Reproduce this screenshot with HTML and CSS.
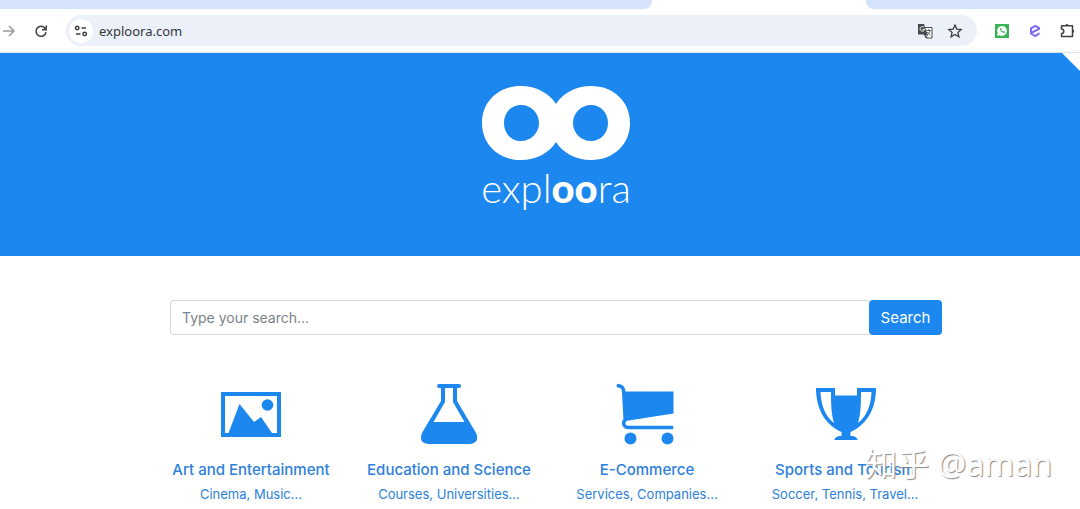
FILE: index.html
```html
<!DOCTYPE html>
<html lang="en">
<head>
    <meta charset="UTF-8">
    <meta name="viewport" content="width=device-width, initial-scale=1.0">
    <title>exploora</title>
    <link rel="stylesheet" href="styles.css">
</head>
<body>
    <!-- Browser bar -->
    <div class="tabs">
        <div class="tab-left"></div>
        <div class="tab-right"></div>
    </div>
    <div class="toolbar">
        <button class="tool" type="button" aria-label="Forward">
            <svg width="16" height="16" viewBox="0 0 16 16" fill="none" stroke="#9a9a9a" stroke-width="1.5"><path d="M3 8h11M9 3l5 5-5 5"/></svg>
        </button>
        <button class="tool" type="button" aria-label="Reload">
            <svg width="16" height="16" viewBox="0 0 16 16" fill="none" stroke="#3c4043" stroke-width="1.5"><path d="M13 9.200A5 5 0 1 1 12 5.200L13 6.400"/><path d="M13.200 2.600v4.200H9"/></svg>
        </button>
        <div class="address">
            <button class="site-info" type="button" aria-label="Site information">
                <svg width="14" height="14" viewBox="0 0 14 14" fill="none" stroke="#3c4043" stroke-width="1.5"><circle cx="3.2" cy="4" r="1.7"/><path d="M7.5 4H12M2 10h4.5"/><circle cx="10.7" cy="10" r="1.7"/></svg>
            </button>
            <input class="url" type="text" value="exploora.com" aria-label="Address">
            <button class="tool" type="button" aria-label="Translate">
                <svg width="16" height="16" viewBox="0 0 16 16"><path d="M6.5 4.500H15V15H9z" fill="#fff" stroke="#4a4d51"/><path d="M1 1h6l3.500 10.500H1z" fill="#45484c"/><path d="M7.300 4.600A2.300 2.300 0 1 0 7.600 6.500H5.600" fill="none" stroke="#fff"/><path d="M9.500 7.500h4.500M11.700 6.200v1.300M13 7.500c-.4 2-1.600 3.500-3 4.500M10.300 9c.8 1.500 2 2.500 3.200 3M7 11.500L9.500 15l.8-3.500z" fill="none" stroke="#4a4d51" stroke-width=".9"/></svg>
            </button>
            <button class="tool" type="button" aria-label="Bookmark">
                <svg width="16" height="16" viewBox="0 0 16 16" fill="none" stroke="#3c4043" stroke-width="1.3"><path d="M8 2l1.800 4.100 4.400.4-3.300 2.900 1 4.400L8 11.500l-3.900 2.300 1-4.400-3.300-2.900 4.400-.4z"/></svg>
            </button>
        </div>
        <button class="tool" type="button" aria-label="WhatsApp">
            <svg width="16" height="16" viewBox="0 0 16 16"><path d="M1 1h14v14H1z" fill="#38b454"/><path d="M3 12.800l.7-2.500a4.900 4.900 0 1 1 2 1.900z" fill="#fff"/><path d="M6 5.500c0 2.600 1.800 4.400 4.300 4.500l.6-1.300-1.500-.8-.6.600c-.8-.3-1.300-.9-1.600-1.600l.5-.6-.6-1.400z" fill="#38b454"/></svg>
        </button>
        <button class="tool" type="button" aria-label="Extension">
            <svg width="16" height="16" viewBox="0 0 16 16" fill="none" stroke="#7c6cf0" stroke-width="2"><path d="M5 9.500l7-3.500V4.800L8.300 2.800 4 5.300v5.200L8.300 13l4.200-2.800"/></svg>
        </button>
        <button class="tool" type="button" aria-label="Extensions menu">
            <svg width="16" height="16" viewBox="0 0 16 16" fill="none" stroke="#3c4043" stroke-width="1.5"><path d="M1.500 2.800H12.500V13.500H1.500V10.500a2.300 2.300 0 0 0 0-4.600z" stroke-linejoin="round"/><path d="M5.300 2.800a1.700 1.700 0 0 1 3.400 0zM12.500 6.500a1.700 1.700 0 0 1 0 3.400z" fill="#3c4043" stroke="none"/></svg>
        </button>
    </div>

    <!-- Header -->
    <header class="header">
        <a class="logo" href="#">
            <svg class="logo-mark" width="148" height="74" viewBox="0 0 148 74" aria-hidden="true">
                <path fill="#fff" fill-rule="evenodd" d="M39 0C16 0 0 16 0 37s16 37 39 37c15 0 28-7 35-18 7 11 20 18 35 18 23 0 39-16 39-37S132 0 109 0C94 0 81 7 74 18 67 7 54 0 39 0zM39 19c10 0 18 8 18 18s-8 18-18 18-17-8-17-18 7-18 17-18zM109 19c10 0 17 8 17 18s-7 18-17 18-18-8-18-18 8-18 18-18z"/>
            </svg>
            <span class="logo-text">expl<b>oo</b>ra</span>
        </a>
        <div class="corner"></div>
    </header>

    <!-- Search and categories -->
    <main class="content">
        <form class="search">
            <input class="search-input" type="text" placeholder="Type your search..." aria-label="Type your search">
            <button class="search-button" type="button">Search</button>
        </form>
        <div class="categories">
            <a class="category" href="#">
                <svg width="64" height="64" viewBox="0 0 64 64" fill="#1c87ef"><path fill-rule="evenodd" d="M2 10h60v45H2zM6 14v37h3.500L20.500 22 35 40l7-5 11 16h5V14z"/><circle cx="48.500" cy="23" r="5.800"/></svg>
                <span class="name">Art and Entertainment</span>
                <span class="topics">Cinema, Music...</span>
            </a>
            <a class="category" href="#">
                <svg width="64" height="64" viewBox="0 0 64 64" fill="#1c87ef"><path fill-rule="evenodd" d="M22 2h20a2 2 0 0 1 0 4h-2v13l18.500 31c4 7 1 12-6.500 12H12c-7.500 0-10-5-6.500-12L24 19V6h-2a2 2 0 0 1 0-4zM28 6v14L16.500 40h31L36 20V6z"/></svg>
                <span class="name">Education and Science</span>
                <span class="topics">Courses, Universities...</span>
            </a>
            <a class="category" href="#">
                <svg width="64" height="64" viewBox="0 0 64 64" fill="#1c87ef"><path d="M8 9.500h50.500v22L10.500 39z"/><path d="M4 4c3 0 4.500 2 4.700 6l1.500 28c-3 3-1.500 7.500 3.500 7.500h44.500" fill="none" stroke="#1c87ef" stroke-width="3.500"/><circle cx="3.500" cy="3.700" r="2"/><circle cx="15.500" cy="56.500" r="6"/><circle cx="52.500" cy="56.500" r="6"/></svg>
                <span class="name">E-Commerce</span>
                <span class="topics">Services, Companies...</span>
            </a>
            <a class="category" href="#">
                <svg width="64" height="64" viewBox="0 0 64 64" fill="#1c87ef"><path fill-rule="evenodd" d="M3 6h19v7.500h22V6h19c0 20-8 36-25.500 44v4c4 0 7 1.500 7 4h-23c0-2.500 3-4 7-4v-4C11 42 3 26 3 6zM7.500 10C8 23 12 34 21 41 18.500 32 18 25 18 10zM48 10c0 15-.5 22-3 31C54 34 58 23 58.500 10z"/></svg>
                <span class="name">Sports and Tourism</span>
                <span class="topics">Soccer, Tennis, Travel...</span>
            </a>
        </div>
    </main>

    <div class="watermark">知乎 @aman</div>
</body>
</html>
```

FILE: styles.css
```css
* {
    box-sizing: border-box;
}
body {
    margin: 0;
    font-family: Inter, "Liberation Sans", sans-serif;
    background-color: #fff;
    position: relative;
    overflow: hidden;
}
button {
    border: none;
    padding: 0;
    background: none;
    cursor: pointer;
}
svg {
    display: block;
}

/* Browser bar */
.tabs {
    display: flex;
    gap: 214px;
    height: 9px;
}
.tab-left {
    flex: 1;
    background-color: #d5e2fb;
    border-bottom-right-radius: 8px;
}
.tab-right {
    width: 214px;
    background-color: #d5e2fb;
    border-bottom-left-radius: 8px;
}
.toolbar {
    display: flex;
    align-items: center;
    gap: 17px;
    height: 43px;
    padding-right: 4px;
}
.address {
    flex: 1;
    display: flex;
    align-items: center;
    gap: 14px;
    height: 31px;
    padding: 0 14px 0 3px;
    border-radius: 16px;
    background-color: #ebf0f9;
}
.site-info {
    display: flex;
    align-items: center;
    justify-content: center;
    width: 24px;
    height: 24px;
    border-radius: 50%;
    background-color: #fff;
}
.url {
    flex: 1;
    min-width: 0;
    margin-left: -8px;
    padding: 0;
    border: none;
    outline: none;
    background: none;
    color: #33373b;
    font: 13px "Noto Sans", sans-serif;
}

/* Header */
.header {
    position: relative;
    display: flex;
    justify-content: center;
    height: 204px;
    padding: 33px 0 0 32px;
    border-top: 1px solid #dfe6ee;
    background-color: #1c87ef;
}
.logo {
    display: flex;
    flex-direction: column;
    align-items: center;
    gap: 6px;
    color: #fff;
    text-decoration: none;
}
.logo-text {
    font: 300 40px/44px Lato, sans-serif;
}
.logo-text b {
    font-weight: 900;
}
.corner {
    position: absolute;
    top: 0;
    right: 0;
    border-top: 18px solid #fff;
    border-left: 18px solid transparent;
}

/* Search */
.content {
    padding: 44px 0 0 32px;
}
.search {
    display: flex;
    max-width: 772px;
    margin: 0 auto;
}
.search-input {
    flex: 1;
    min-width: 0;
    height: 35px;
    padding: 0 11px;
    border: 1px solid #d5dade;
    border-right: none;
    border-radius: 4px 0 0 4px;
    color: #444;
    font: 14px Inter, sans-serif;
}
.search-input::placeholder {
    color: #7b8288;
}
.search-button {
    width: 73px;
    border-radius: 4px;
    background-color: #1c87ef;
    color: #fff;
    font: 15px Inter, sans-serif;
}

/* Categories */
.categories {
    display: grid;
    grid-template-columns: repeat(4, 1fr);
    max-width: 808px;
    margin: 47px auto 0;
    padding-right: 16px;
}
.category {
    display: flex;
    flex-direction: column;
    align-items: center;
    text-decoration: none;
    white-space: nowrap;
    color: #2d7fdb;
}
.name {
    margin-top: 12px;
    font-size: 15px;
    font-weight: 500;
    line-height: 24px;
}
.topics {
    font-size: 13px;
    line-height: 24px;
}

.watermark {
    position: absolute;
    right: 28px;
    bottom: 20px;
    color: #fff;
    font: 32px/44px "Noto Sans", "Noto Sans CJK SC", sans-serif;
    text-shadow: 1px 1px 1px #888;
}
```
